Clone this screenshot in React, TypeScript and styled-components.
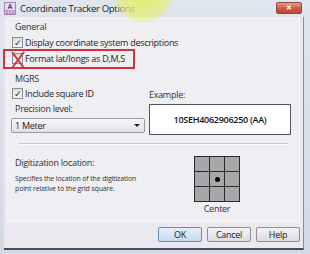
import React from "react";
import styled, { createGlobalStyle } from "styled-components";

const Global = createGlobalStyle`
  html, body { margin: 0; padding: 0; background: #d6dce6; }
  body { font-family: "Open Sans", "Liberation Sans", sans-serif; }
`;

const Window = styled.div`
  position: relative;
  width: 310px;
  height: 254px;
  box-sizing: border-box;
  overflow: hidden;
  background: linear-gradient(#dfe6ef, #d3dae5);
  display: flex;
  flex-direction: column;
  font-size: 9px;
  letter-spacing: -0.28px;
  color: #1e1e1e;
`;

const TitleBar = styled.div`
  height: 17px;
  display: flex;
  align-items: center;
  padding: 0 8px 0 4px;
  gap: 4px;
`;

const Title = styled.span`
  flex: 1;
  font-size: 9.5px;
  letter-spacing: -0.3px;
  color: #1a1a2a;
`;

const Close = styled.div`
  width: 24px;
  height: 10px;
  margin-top: -2px;
  border-radius: 2px;
  background: linear-gradient(#e39c88, #c95a42 55%, #bb4a33);
  border: 1px solid #8f4a3e;
  color: #fff;
  font-size: 7px;
  font-weight: bold;
  display: flex;
  align-items: center;
  justify-content: center;
`;

const Client = styled.div`
  flex: 1;
  margin: 0 6px 4px 4px;
  background: #ebe9ef;
  border-right: 1px solid #8a8f9c;
  border-bottom: 2px solid #4a4f5c;
  display: flex;
  flex-direction: column;
  padding: 1px 3px 6px 3px;
`;

const Panel = styled.div`
  background: #efeef2;
  border: 1px solid #f7f6f9;
  padding: 1px 7px 0 7px;
  height: 204px;
  box-sizing: border-box;
`;

const Heading = styled.div<{ $gap?: number }>`
  height: 13px;
  line-height: 13px;
  color: #333;
  margin-top: ${(p) => p.$gap ?? 0}px;
`;

const CheckRow = styled.div`
  display: flex;
  align-items: center;
  gap: 2px;
  height: 14px;
  margin: 2px 0 2px -3px;
`;

const Box = styled.span`
  width: 9px;
  height: 9px;
  border: 1px solid #8c8c94;
  background: linear-gradient(#dcdce2, #f6f6f8);
  display: inline-flex;
  align-items: center;
  justify-content: center;
  font-size: 9px;
  line-height: 9px;
  color: #222;
`;

const Columns = styled.div`
  display: flex;
  gap: 4px;
  margin-top: -1px;
`;

const Col = styled.div<{ $w: number }>`
  width: ${(p) => p.$w}px;
  display: flex;
  flex-direction: column;
`;

const Label = styled.div<{ $h?: number; $lh?: number }>`
  height: ${(p) => p.$h ?? 14}px;
  line-height: ${(p) => p.$lh ?? p.$h ?? 14}px;
  color: #333;
`;

const Select = styled.div`
  margin-top: 2px;
  margin-left: -4px;
  height: 15px;
  box-sizing: border-box;
  border: 1px solid #9a9aa4;
  border-radius: 2px;
  background: linear-gradient(#f6f6f8, #e2e1e7);
  display: flex;
  align-items: center;
  justify-content: space-between;
  padding: 0 4px 0 3px;
`;

const Arrow = styled.span`
  width: 0;
  height: 0;
  border-left: 3px solid transparent;
  border-right: 3px solid transparent;
  border-top: 3px solid #222;
`;

const Example = styled.div`
  height: 31px;
  box-sizing: border-box;
  border: 1px solid #55555c;
  background: #fff;
  display: flex;
  align-items: center;
  justify-content: center;
  font-weight: 600;
  font-size: 9px;
  color: #111;
  margin-top: 1px;
`;

const Rule = styled.div`
  height: 1px;
  background: #c9c7ce;
  border-bottom: 1px solid #fbfbfc;
  margin: 8px 4px 0 4px;
`;

const Lower = styled.div`
  display: flex;
  justify-content: space-between;
  margin-top: 11px;
`;

const Desc = styled.div`
  font-size: 7px;
  line-height: 10px;
  color: #333;
  letter-spacing: -0.15px;
  margin-top: 4px;
`;

const GridCol = styled.div`
  display: flex;
  flex-direction: column;
  align-items: center;
  width: 60px;
  margin-right: 45px;
`;

const Grid = styled.div`
  display: grid;
  grid-template-columns: repeat(3, 14px);
  grid-template-rows: repeat(3, 14px);
  gap: 1px;
  background: #2a2a2e;
  border: 1px solid #2a2a2e;
`;

const Cell = styled.div`
  background: #a9a6aa;
  display: flex;
  align-items: center;
  justify-content: center;
`;

const Dot = styled.span`
  width: 5px;
  height: 5px;
  border-radius: 50%;
  background: #000;
`;

const Caption = styled.div`
  color: #333;
`;

const Buttons = styled.div`
  display: flex;
  justify-content: flex-end;
  gap: 5px;
  margin-top: auto;
`;

const Button = styled.div<{ $default?: boolean }>`
  width: 44px;
  height: 15px;
  box-sizing: border-box;
  border-radius: 2px;
  border: 1px solid ${(p) => (p.$default ? "#5b8fc0" : "#8e8e96")};
  background: ${(p) =>
    p.$default
      ? "linear-gradient(#e4eef8, #c7dcef)"
      : "linear-gradient(#f4f4f6, #dcdbe0)"};
  display: flex;
  align-items: center;
  justify-content: center;
  color: #222;
`;

const Highlight = styled.div`
  position: absolute;
  left: 3px;
  top: 49px;
  width: 132px;
  height: 20px;
  box-sizing: border-box;
  border: 2px solid #d2323e;
`;

const Glow = styled.div`
  position: absolute;
  left: 112px;
  top: -34px;
  width: 62px;
  height: 58px;
  border-radius: 50%;
  background: radial-gradient(rgba(228, 236, 100, 0.95), rgba(230, 238, 120, 0.7) 55%, rgba(235, 240, 140, 0) 72%);
`;

const AppIcon = () => (
  <svg width="12" height="13" viewBox="0 0 12 13">
    <rect x="0.5" y="0.5" width="11" height="12" fill="#ecdcef" stroke="#a184b0" />
    <text x="6" y="7" fontSize="7" fontFamily="Liberation Sans" fontWeight="bold" fill="#5a3a6e" textAnchor="middle">A</text>
    <rect x="1.5" y="8" width="9" height="4" fill="#b388c7" />
    <path d="M4.5 8v4M7.5 8v4M1.5 10h9" stroke="#ecdcef" strokeWidth="0.6" />
  </svg>
);

const RedX = () => (
  <svg width="16" height="18" viewBox="0 0 16 18" style={{ position: "absolute", left: 10, top: 51 }}>
    <path d="M2 1 L14 17 M14 1 L2 17" stroke="#d2323e" strokeWidth="2" fill="none" />
  </svg>
);

export default function App() {
  return (
    <>
      <Global />
      <Window>
        <TitleBar>
          <AppIcon />
          <Title>Coordinate Tracker Options</Title>
          <Close>✕</Close>
        </TitleBar>
        <Client>
          <Panel>
            <Heading>General</Heading>
            <CheckRow>
              <Box>✓</Box>
              Display coordinate system descriptions
            </CheckRow>
            <CheckRow>
              <Box />
              Format lat/longs as D,M,S
            </CheckRow>
            <Heading $gap={7}>MGRS</Heading>
            <Columns>
              <Col $w={130}>
                <CheckRow>
                  <Box>✓</Box>
                  Include square ID
                </CheckRow>
                <Label>Precision level:</Label>
                <Select>
                  1 Meter
                  <Arrow />
                </Select>
              </Col>
              <Col $w={142}>
                <Label $h={19} $lh={22}>Example:</Label>
                <Example>10SEH4062906250 (AA)</Example>
              </Col>
            </Columns>
            <Rule />
            <Lower>
              <div>
                <Label>Digitization location:</Label>
                <Desc>
                  Specifies the location of the digitization
                  <br />
                  point relative to the grid square.
                </Desc>
              </div>
              <GridCol>
                <Grid>
                  {Array.from({ length: 9 }).map((_, i) => (
                    <Cell key={i}>{i === 4 && <Dot />}</Cell>
                  ))}
                </Grid>
                <Caption>Center</Caption>
              </GridCol>
            </Lower>
          </Panel>
          <Buttons>
            <Button $default>OK</Button>
            <Button>Cancel</Button>
            <Button>Help</Button>
          </Buttons>
        </Client>
        <Glow />
        <Highlight />
        <RedX />
      </Window>
    </>
  );
}
